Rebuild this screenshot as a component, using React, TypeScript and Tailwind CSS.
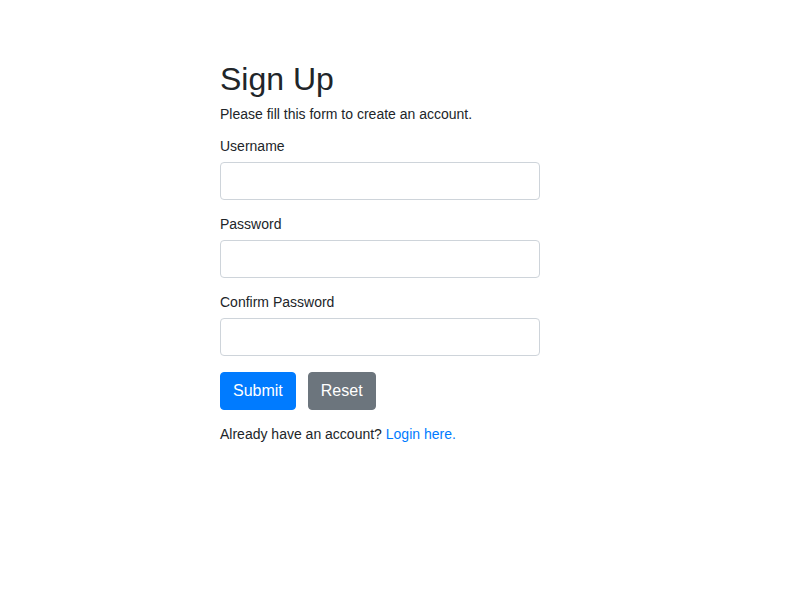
import { useState, type FormEvent } from "react";

export default function App() {
  const [form, setForm] = useState({ username: "", password: "", confirm: "" });

  const handleSubmit = (e: FormEvent) => {
    e.preventDefault();
  };

  const inputClass =
    "block w-full h-[38px] px-3 rounded-[4px] border border-[#ced4da] bg-white text-[16px] text-[#495057] outline-none focus:border-[#80bdff]";

  return (
    <div
      className="min-h-screen bg-white text-[#212529] text-[14px] leading-[16px]"
      style={{ fontFamily: '"Liberation Sans", Arial, sans-serif' }}
    >
      <div className="pl-[220px] pt-[60px] w-[540px]">
        <h2 className="text-[32px] leading-[1.2] font-medium mb-2">Sign Up</h2>
        <p className="mb-4">Please fill this form to create an account.</p>
        <form onSubmit={handleSubmit}>
          <div className="mb-4">
            <label className="block mb-2">Username</label>
            <input
              type="text"
              value={form.username}
              onChange={(e) => setForm({ ...form, username: e.target.value })}
              className={inputClass}
            />
          </div>
          <div className="mb-4">
            <label className="block mb-2">Password</label>
            <input
              type="password"
              value={form.password}
              onChange={(e) => setForm({ ...form, password: e.target.value })}
              className={inputClass}
            />
          </div>
          <div className="mb-4">
            <label className="block mb-2">Confirm Password</label>
            <input
              type="password"
              value={form.confirm}
              onChange={(e) => setForm({ ...form, confirm: e.target.value })}
              className={inputClass}
            />
          </div>
          <div className="mb-4 flex gap-3">
            <button
              type="submit"
              className="h-[38px] px-3 rounded-[4px] border border-[#007bff] bg-[#007bff] text-white text-[16px] leading-6 hover:bg-[#0069d9]"
            >
              Submit
            </button>
            <button
              type="reset"
              onClick={() => setForm({ username: "", password: "", confirm: "" })}
              className="h-[38px] px-3 rounded-[4px] border border-[#6c757d] bg-[#6c757d] text-white text-[16px] leading-6 hover:bg-[#5a6268]"
            >
              Reset
            </button>
          </div>
          <p>
            Already have an account?{" "}
            <a href="#" className="text-[#007bff] hover:underline">
              Login here.
            </a>
          </p>
        </form>
      </div>
    </div>
  );
}
